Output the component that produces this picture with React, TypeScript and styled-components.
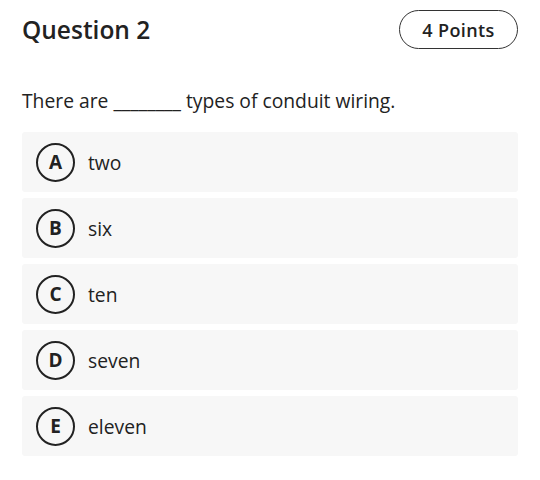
import React from 'react';
import styled, { createGlobalStyle } from 'styled-components';

const GlobalStyle = createGlobalStyle`
  body {
    margin: 0;
    background: #fff;
    font-family: 'Open Sans', 'Liberation Sans', sans-serif;
    color: #222;
  }
`;

const Card = styled.div`
  padding: 10px 22px 0 22px;
`;

const Header = styled.div`
  display: flex;
  justify-content: space-between;
  align-items: center;
`;

const Title = styled.h2`
  margin: 0;
  font-size: 24.5px;
  font-weight: 600;
  color: #222;
`;

const Points = styled.div`
  height: 37px;
  width: 117px;
  border: 1px solid #333;
  border-radius: 20px;
  display: flex;
  align-items: center;
  justify-content: center;
  font-size: 18px;
  font-weight: 600;
  letter-spacing: 0.4px;
  color: #222;
`;

const Prompt = styled.p`
  margin: 38px 0 18px;
  font-size: 19.3px;
  color: #222;
`;

const Options = styled.div`
  display: flex;
  flex-direction: column;
  gap: 6px;
`;

const Option = styled.div`
  height: 60px;
  background: #f7f7f7;
  border-radius: 3px;
  display: flex;
  align-items: center;
  padding-left: 14px;
  gap: 13px;
`;

const Letter = styled.span`
  width: 35px;
  height: 35px;
  border: 2px solid #222;
  border-radius: 50%;
  display: flex;
  align-items: center;
  justify-content: center;
  font-size: 19px;
  font-weight: 700;
  color: #222;
`;

const Label = styled.span`
  font-size: 19.3px;
  color: #222;
`;

const answers = [
  { key: 'A', text: 'two' },
  { key: 'B', text: 'six' },
  { key: 'C', text: 'ten' },
  { key: 'D', text: 'seven' },
  { key: 'E', text: 'eleven' },
];

export default function App() {
  return (
    <>
      <GlobalStyle />
      <Card>
        <Header>
          <Title>Question 2</Title>
          <Points>4 Points</Points>
        </Header>
        <Prompt>There are ________ types of conduit wiring.</Prompt>
        <Options>
          {answers.map(a => (
            <Option key={a.key}>
              <Letter>{a.key}</Letter>
              <Label>{a.text}</Label>
            </Option>
          ))}
        </Options>
      </Card>
    </>
  );
}
